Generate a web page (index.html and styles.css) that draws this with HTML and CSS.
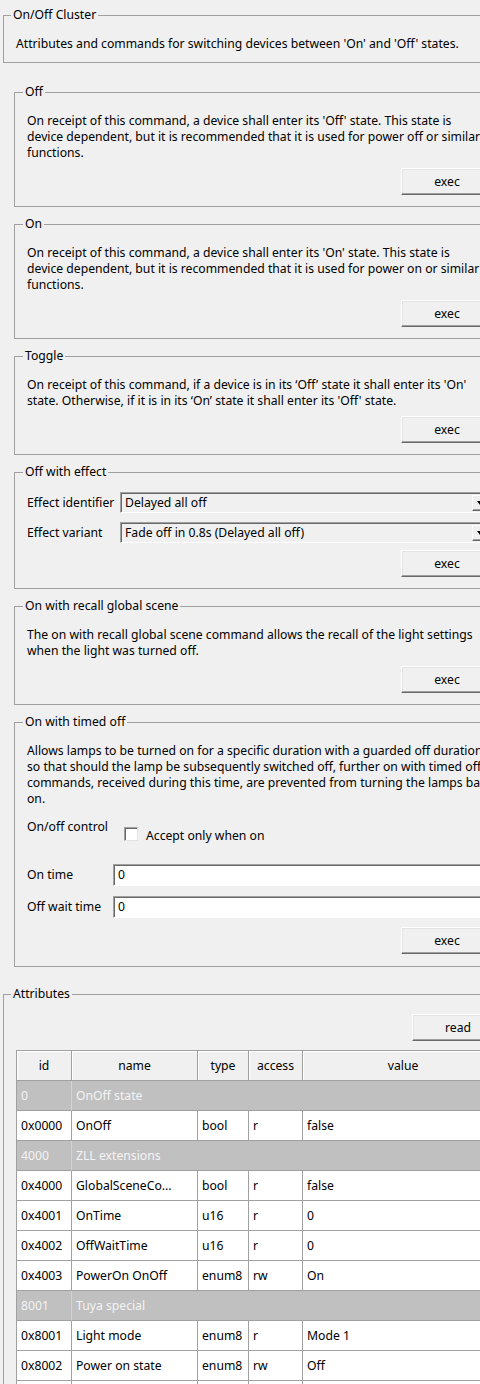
FILE: index.html
```html
<!DOCTYPE html>
<html>
<head>
<meta charset="utf-8">
<link rel="stylesheet" href="styles.css">
</head>
<body>
<div class="page">
  <section class="group outer cluster">
    <span class="group-title">On/Off Cluster</span>
    <p class="desc">Attributes and commands for switching devices between 'On' and 'Off' states.</p>
  </section>

  <div class="commands">
    <section class="group cmd">
      <span class="group-title">Off</span>
      <p class="desc">On receipt of this command, a device shall enter its 'Off' state. This state is<br>device dependent, but it is recommended that it is used for power off or similar<br>functions.</p>
      <div class="actions"><button class="btn">exec</button></div>
    </section>

    <section class="group cmd">
      <span class="group-title">On</span>
      <p class="desc">On receipt of this command, a device shall enter its 'On' state. This state is<br>device dependent, but it is recommended that it is used for power on or similar<br>functions.</p>
      <div class="actions"><button class="btn">exec</button></div>
    </section>

    <section class="group cmd">
      <span class="group-title">Toggle</span>
      <p class="desc">On receipt of this command, if a device is in its ‘Off’ state it shall enter its 'On'<br>state. Otherwise, if it is in its ‘On’ state it shall enter its 'Off' state.</p>
      <div class="actions"><button class="btn">exec</button></div>
    </section>

    <section class="group cmd effect">
      <span class="group-title">Off with effect</span>
      <div class="form form-effect">
        <span class="label">Effect identifier</span>
        <div class="combo"><span class="combo-text">Delayed all off</span><span class="combo-arrow"></span></div>
        <span class="label">Effect variant</span>
        <div class="combo"><span class="combo-text">Fade off in 0.8s (Delayed all off)</span><span class="combo-arrow"></span></div>
      </div>
      <div class="actions"><button class="btn">exec</button></div>
    </section>

    <section class="group cmd">
      <span class="group-title">On with recall global scene</span>
      <p class="desc">The on with recall global scene command allows the recall of the light settings<br>when the light was turned off.</p>
      <div class="actions"><button class="btn">exec</button></div>
    </section>

    <section class="group cmd timed">
      <span class="group-title">On with timed off</span>
      <p class="desc">Allows lamps to be turned on for a specific duration with a guarded off duration<br>so that should the lamp be subsequently switched off, further on with timed off<br>commands, received during this time, are prevented from turning the lamps back<br>on.</p>
      <div class="form form-timed">
        <span class="label label-top">On/off control</span>
        <div class="check-field"><span class="checkbox"></span><span>Accept only when on</span></div>
        <span class="label">On time</span>
        <div class="input">0</div>
        <span class="label">Off wait time</span>
        <div class="input">0</div>
      </div>
      <div class="actions"><button class="btn">exec</button></div>
    </section>
  </div>

  <section class="group outer attrs">
    <span class="group-title">Attributes</span>
    <div class="actions first"><button class="btn">read</button></div>
    <table class="attr-table">
      <colgroup>
        <col class="c-id"><col class="c-name"><col class="c-type"><col class="c-access"><col class="c-value">
      </colgroup>
      <thead>
        <tr><th>id</th><th>name</th><th>type</th><th>access</th><th>value</th></tr>
      </thead>
      <tbody>
        <tr class="section"><td>0</td><td colspan="4">OnOff state</td></tr>
        <tr><td>0x0000</td><td>OnOff</td><td>bool</td><td>r</td><td>false</td></tr>
        <tr class="section"><td>4000</td><td colspan="4">ZLL extensions</td></tr>
        <tr><td>0x4000</td><td>GlobalSceneCo...</td><td>bool</td><td>r</td><td>false</td></tr>
        <tr><td>0x4001</td><td>OnTime</td><td>u16</td><td>r</td><td>0</td></tr>
        <tr><td>0x4002</td><td>OffWaitTime</td><td>u16</td><td>r</td><td>0</td></tr>
        <tr><td>0x4003</td><td>PowerOn OnOff</td><td>enum8</td><td>rw</td><td>On</td></tr>
        <tr class="section"><td>8001</td><td colspan="4">Tuya special</td></tr>
        <tr><td>0x8001</td><td>Light mode</td><td>enum8</td><td>r</td><td>Mode 1</td></tr>
        <tr><td>0x8002</td><td>Power on state</td><td>enum8</td><td>rw</td><td>Off</td></tr>
        <tr><td>&nbsp;</td><td></td><td></td><td></td><td></td></tr>
      </tbody>
    </table>
  </section>
</div>
</body>
</html>
```

FILE: styles.css
```css
html, body {
  margin: 0;
  padding: 0;
  background: #f0f0f0;
  overflow: hidden;
}

body {
  width: 480px;
  height: 1384px;
  font-family: "Noto Sans", "Open Sans", sans-serif;
  font-size: 12.2px;
  color: #000;
}

.page {
  width: 530px;
  padding-top: 15px;
}

.group {
  position: relative;
  box-sizing: border-box;
  border: 1px solid #a0a0a0;
}

.group-title {
  position: absolute;
  top: -9px;
  left: 8px;
  padding: 0 2px;
  line-height: 16px;
  background: #f0f0f0;
  white-space: nowrap;
}

.outer .group-title {
  left: 7px;
}

.desc {
  margin: 0;
  line-height: 16px;
  white-space: nowrap;
}

.cluster {
  margin-left: 3px;
  width: 514px;
  padding: 20px 12px 10px;
}

.commands {
  margin: 29px 0 0 14px;
  width: 492px;
  display: flex;
  flex-direction: column;
  gap: 17px;
}

.cmd {
  padding: 20px 12px 11px;
}

.cmd.effect {
  padding-top: 19px;
}

.cmd.timed {
  padding-bottom: 12px;
}

.actions {
  display: flex;
  justify-content: flex-end;
  margin-top: 7px;
}

.timed .actions {
  margin-top: 9px;
}

.actions.first {
  margin-top: 0;
}

.btn {
  box-sizing: border-box;
  width: 92px;
  height: 27px;
  padding: 0;
  font: inherit;
  color: #000;
  background: #f0f0f0;
  border: 1px solid;
  border-color: #fff #696969 #696969 #fff;
  box-shadow: inset -1px -1px 0 #a0a0a0, inset 1px 1px 0 #e3e3e3;
}

.form {
  display: grid;
  align-items: center;
  row-gap: 9px;
}

.form-effect {
  grid-template-columns: 93px 1fr;
}

.form-timed {
  grid-template-columns: 86px 1fr;
  margin-top: 12px;
  row-gap: 10px;
}

.label {
  white-space: nowrap;
  line-height: 16px;
}

.label-top {
  align-self: start;
}

.combo {
  box-sizing: border-box;
  height: 21px;
  display: flex;
  align-items: center;
  background: #f0f0f0;
  border: 1px solid;
  border-color: #a0a0a0 #fff #fff #a0a0a0;
  box-shadow: inset 1px 1px 0 #696969;
}

.combo-text {
  flex: 1;
  padding-left: 4px;
  white-space: nowrap;
}

.combo-arrow {
  position: relative;
  box-sizing: border-box;
  width: 17px;
  height: 16px;
  margin-right: 3px;
  margin-top: 1px;
  background: #f0f0f0;
  border: 1px solid;
  border-color: #fff #696969 #696969 #fff;
  box-shadow: inset -1px -1px 0 #a0a0a0;
}

.combo-arrow::after {
  content: "";
  position: absolute;
  left: 4px;
  top: 5px;
  border-left: 3.5px solid transparent;
  border-right: 3.5px solid transparent;
  border-top: 4px solid #000;
}

.check-field {
  box-sizing: border-box;
  height: 35px;
  display: flex;
  align-items: flex-start;
  gap: 8px;
  padding: 8px 0 0 11px;
}

.check-field span:last-child {
  line-height: 16px;
  margin-top: 1px;
}

.checkbox {
  box-sizing: border-box;
  width: 14px;
  height: 14px;
  background: #fff;
  border: 1px solid;
  border-color: #a0a0a0 #e3e3e3 #e3e3e3 #a0a0a0;
  box-shadow: inset 1px 1px 0 #696969;
}

.input {
  box-sizing: border-box;
  height: 22px;
  line-height: 20px;
  padding-left: 4px;
  background: #fff;
  border: 1px solid;
  border-color: #a0a0a0 #fff #fff #a0a0a0;
  box-shadow: inset 1px 1px 0 #696969;
}

.attrs {
  margin: 27px 0 0 3px;
  width: 514px;
  height: 420px;
  padding: 19px 12px 0;
}

.attr-table {
  margin-top: 9px;
  width: 488px;
  table-layout: fixed;
  border-collapse: separate;
  border-spacing: 0;
  border-top: 1px solid #a0a0a0;
  border-left: 1px solid #a0a0a0;
  background: #fff;
}

.c-id { width: 55px; }
.c-name { width: 126px; }
.c-type { width: 51px; }
.c-access { width: 54px; }
.c-value { width: auto; }

.attr-table th,
.attr-table td {
  padding: 0 0 0 4px;
  line-height: 29px;
  height: 29px;
  white-space: nowrap;
  overflow: hidden;
  text-align: left;
  font-weight: normal;
  border-right: 1px solid #a0a0a0;
  border-bottom: 1px solid #a0a0a0;
}

.attr-table th {
  padding: 0;
  text-align: center;
  background: #f0f0f0;
  box-shadow: inset 1px 1px 0 #fff;
}

.attr-table tr.section td {
  background: #c0c0c0;
  color: #f4f4f4;
  border-bottom-color: #a0a0a0;
  border-right-color: #d4d4d4;
}
```
